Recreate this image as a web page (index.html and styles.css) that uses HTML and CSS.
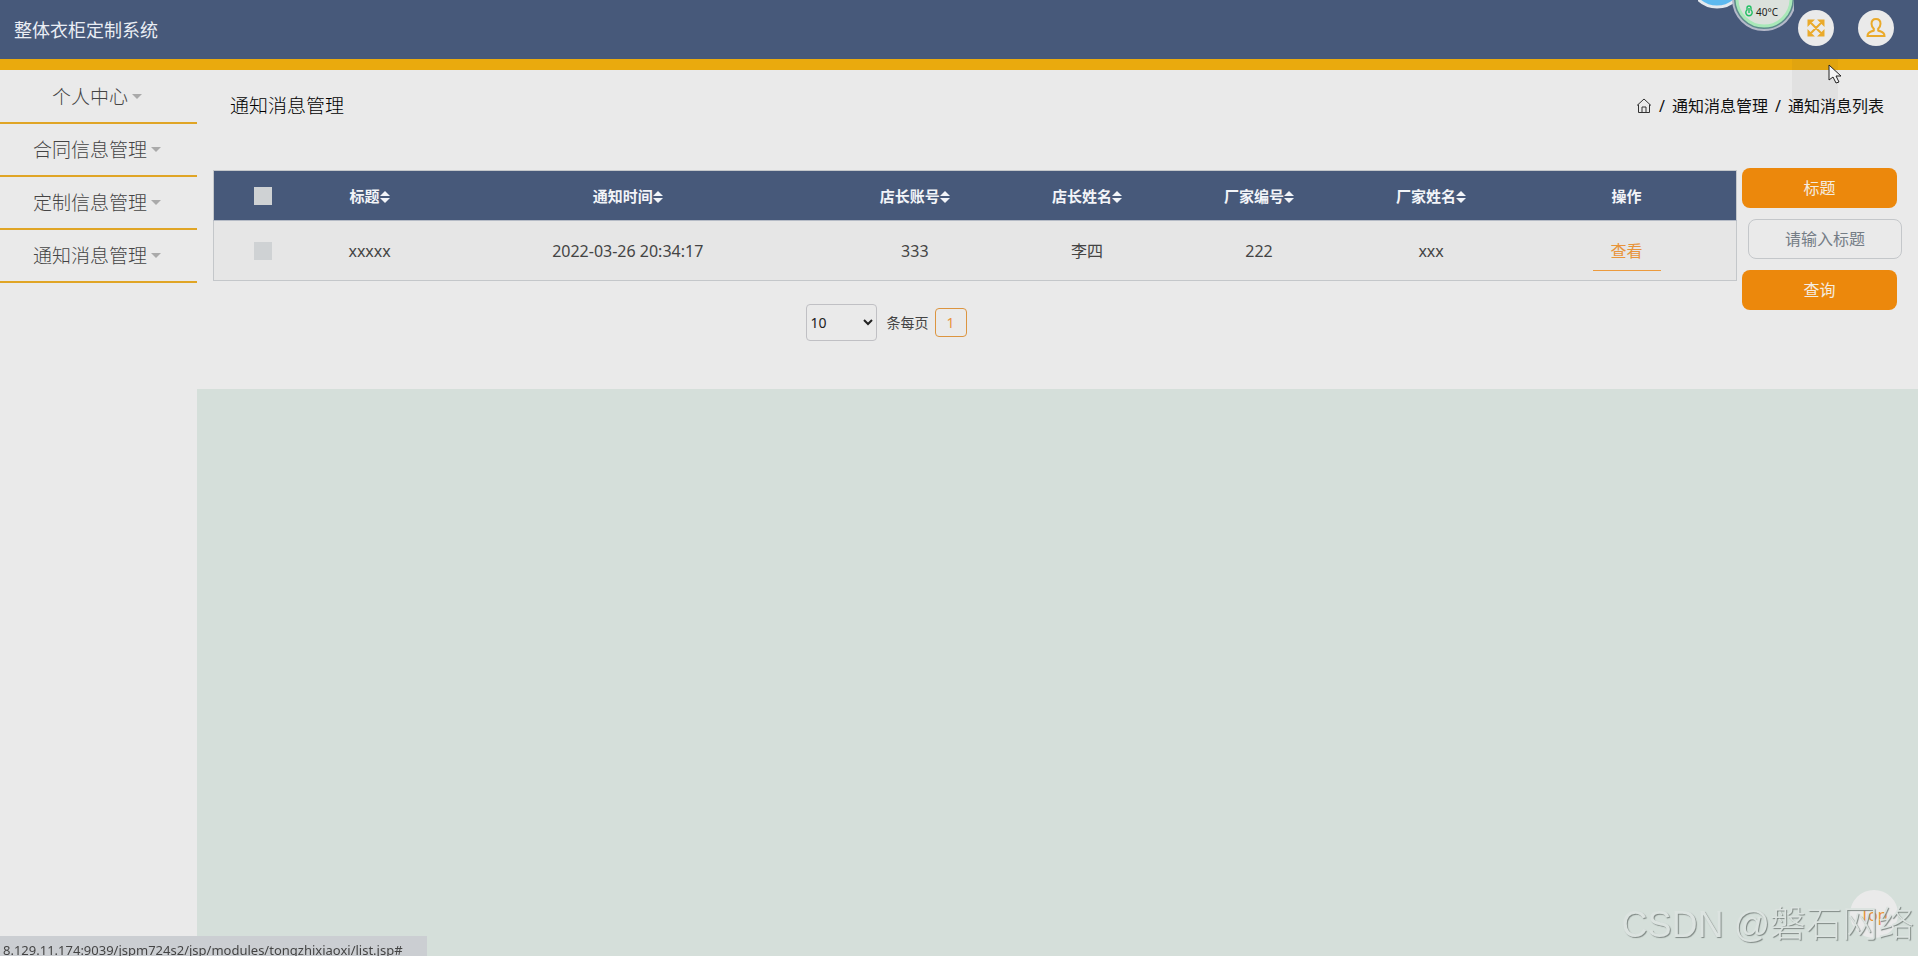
FILE: index.html
```html
<!DOCTYPE html>
<html lang="zh-CN">
<head>
<meta charset="utf-8">
<title>整体衣柜定制系统</title>
<link rel="stylesheet" href="styles.css">
</head>
<body>
<header class="topbar">
  <h1 class="brand">整体衣柜定制系统</h1>
  <div class="tools">
    <button class="tool" aria-label="全屏"><svg width="18" height="18" viewBox="0 0 18 18"><path d="M1.500 5.500v-4h4zM12.500 1.500h4v4zM16.500 12.500v4h-4zM5.500 16.500h-4v-4zM2 2l14 14M16 2L2 16"/></svg></button>
    <button class="tool" aria-label="用户"><svg width="20" height="20" viewBox="0 0 20 20"><path d="M10 1C7.200 1 5.500 3 5.500 5.800c0 2 1 3.700 2.300 4.900v1.800C4.500 14 1.500 14 1.500 18h17c0-4-3-4-6.300-5.500v-1.800c1.300-1.200 2.300-2.900 2.300-4.900C14.500 3 12.800 1 10 1z"/></svg></button>
  </div>
</header>
<div class="shell">
  <nav class="sidebar">
    <a class="item" href="#">个人中心<i class="caret"></i></a>
    <a class="item" href="#">合同信息管理<i class="caret"></i></a>
    <a class="item" href="#">定制信息管理<i class="caret"></i></a>
    <a class="item" href="#">通知消息管理<i class="caret"></i></a>
  </nav>
  <main class="main">
    <section class="panel">
      <div class="heading">
        <h2 class="title">通知消息管理</h2>
        <div class="crumbs">
          <a href="#" aria-label="首页"><svg width="16" height="16" viewBox="0 0 16 16"><path d="M1 7.500L8 1l7 6.500M2.500 6.500v8h11v-8M6 14.500V9h4v5.500"/></svg></a>
          <span>/</span><a href="#">通知消息管理</a><span>/</span><span>通知消息列表</span>
        </div>
      </div>
      <div class="content">
        <div class="listing">
          <table class="grid">
            <colgroup><col class="c-check"><col class="c-title"><col class="c-time"><col class="c-std"><col class="c-std"><col class="c-std"><col class="c-std"><col class="c-act"></colgroup>
            <thead><tr>
              <th><input class="check" type="checkbox" aria-label="全选"></th>
              <th>标题<i class="sort"></i></th>
              <th>通知时间<i class="sort"></i></th>
              <th>店长账号<i class="sort"></i></th>
              <th>店长姓名<i class="sort"></i></th>
              <th>厂家编号<i class="sort"></i></th>
              <th>厂家姓名<i class="sort"></i></th>
              <th>操作</th>
            </tr></thead>
            <tbody><tr>
              <td><input class="check" type="checkbox" aria-label="选择"></td>
              <td>xxxxx</td><td>2022-03-26 20:34:17</td><td>333</td><td>李四</td><td>222</td><td>xxx</td>
              <td><button class="view">查看</button></td>
            </tr></tbody>
          </table>
          <div class="pager">
            <select class="size" id="size"><option>10</option></select>
            <label for="size">条每页</label>
            <button class="page">1</button>
          </div>
        </div>
        <form class="search">
          <label class="pill" for="q">标题</label>
          <input class="query" id="q" type="text" placeholder="请输入标题">
          <button class="pill" type="button">查询</button>
        </form>
      </div>
    </section>
  </main>
</div>
<div class="ghost"></div>
<svg class="gauges" width="96" height="34" viewBox="0 0 96 34">
  <circle cx="19" cy="-20" r="27" fill="#5db9ef" stroke="#e4e9ee" stroke-width="3"/>
  <circle cx="66" cy="-1" r="31" fill="#5d8a8b" stroke="#b5b9ca" stroke-width="2"/>
  <circle cx="66" cy="-1" r="27" fill="#dbe1dc" stroke="#a8e8b8" stroke-width="3"/>
  <path d="M49 10V8a2 2 0 0 1 4 0v2a3.200 3.200 0 1 1-4 0zM51 8v5" fill="none" stroke="#1fbf62" stroke-width="1.400"/>
  <text class="temp" x="58" y="16">40°C</text>
</svg>
<svg class="cursor" width="14" height="20" viewBox="0 0 14 20"><path d="M1 1v15l4-3 3 6 3-1-3-6h5z"/></svg>
<a class="to-top" href="#">Top</a>
<div class="watermark">CSDN @磐石网络</div>
<div class="status">8.129.11.174:9039/jspm724s2/jsp/modules/tongzhixiaoxi/list.jsp#</div>
</body>
</html>
```
FILE: styles.css
```css
* { box-sizing: border-box; }
body { margin: 0; min-height: 100vh; display: flex; flex-direction: column; overflow: hidden; background: #d5dfda; color: #444; font: 16px/24px "Noto Sans", "Noto Sans CJK SC", sans-serif; }
button, input, select { font: inherit; }
a { color: inherit; text-decoration: none; }
svg { display: block; }
.topbar { display: flex; align-items: center; justify-content: space-between; height: 70px; padding: 0 24px 0 14px; background: #47597a; border-bottom: 11px solid #eaaa0d; }
.brand { margin: 0; color: #eaeef5; font-size: 18px; font-weight: 400; }
.tools { display: flex; gap: 24px; padding-bottom: 4px; }
.tool { display: grid; place-items: center; width: 36px; height: 36px; padding: 0; border: 0; border-radius: 50%; background: #eaeaea; }
.tool path { fill: none; stroke: #eaaa2a; stroke-width: 2; }
.shell { flex: 1; display: flex; }
.sidebar { width: 197px; padding-top: 1px; background: #eaeaea; }
.item { display: flex; align-items: center; justify-content: center; gap: 4px; height: 53px; padding-right: 3px; border-bottom: 2px solid #e0a526; font-size: 19px; font-weight: 300; }
.caret { border: 5px solid transparent; border-top-color: #aaa; border-bottom: 0; }
.main { flex: 1; }
.panel { min-height: 319px; padding: 0 16px; background: #eaeaea; }
.heading { display: flex; align-items: center; justify-content: space-between; height: 72px; padding: 0 18px 0 17px; color: #111; }
.title { margin: 0; color: #000; font-size: 19px; font-weight: 300; }
.crumbs { display: flex; align-items: center; gap: 7px; }
.crumbs path { fill: none; stroke: #333; stroke-width: 1; }
.content { display: flex; align-items: flex-start; gap: 5px; padding-top: 26px; }
.listing { flex: 1; padding-top: 2px; }
.grid { width: 100%; table-layout: fixed; border-collapse: collapse; border: 1px solid #c4c7ca; text-align: center; background: #e6e6e6; }
.grid th, .grid td { padding: 0; }
.grid th { height: 50px; background: #47597a; color: #f2f4f8; font-size: 15px; font-weight: 700; border-bottom: 1px solid #b5bbc6; }
.grid td { height: 60px; }
.c-check { width: 6.5%; }
.c-title { width: 7.5%; }
.c-time { width: 26.4%; }
.c-std { width: 11.3%; }
.check { appearance: none; display: block; width: 18px; height: 18px; margin: 0 auto; background: #cfd2d4; }
.sort { display: inline-grid; gap: 2px; vertical-align: middle; }
.sort::before, .sort::after { content: ""; border: 5px solid transparent; }
.sort::before { border-top: 0; border-bottom-color: #f2f4f8; }
.sort::after { border-bottom: 0; border-top-color: #f2f4f8; }
.view { width: 68px; height: 40px; padding: 2px 0 0; border: 0; border-bottom: 1px solid #ec9a3c; background: none; color: #e8943a; }
.pager { display: flex; align-items: center; justify-content: center; gap: 6px; padding: 23px 178px 48px 0; font-size: 14px; }
.size { width: 71px; height: 37px; margin-right: 4px; border: 1px solid #c0c0c4; border-radius: 4px; background: transparent; color: #222; }
.page { width: 32px; height: 29px; padding: 0; border: 1px solid #dc9540; border-radius: 4px; background: none; color: #e8943a; }
.search { display: flex; flex-direction: column; gap: 11px; width: 160px; }
.pill { width: 155px; height: 40px; padding: 0; border: 0; border-radius: 8px; background: #ec880c; color: #f4ece0; line-height: 40px; text-align: center; }
.query { width: 154px; height: 40px; align-self: flex-end; padding: 0; border: 1px solid #c4c7ca; border-radius: 8px; background: transparent; text-align: center; }
.query::placeholder { color: #757d86; }
.ghost { position: absolute; top: 59px; right: 80px; width: 46px; height: 42px; background: rgba(60, 60, 60, .05); }
.gauges { position: absolute; top: 0; right: 124px; }
.temp { font-size: 10px; fill: #222; }
.cursor { position: absolute; top: 64px; right: 76px; }
.cursor path { fill: #f4f4f4; stroke: #222; stroke-width: 1; }
.to-top { position: fixed; right: 20px; bottom: 18px; width: 48px; height: 48px; border-radius: 50%; background: #eaeaea; color: #e8943a; line-height: 50px; text-align: center; }
.watermark { position: fixed; right: 4px; bottom: 7px; color: #dce3e0; font: 300 36px/48px "Liberation Sans", "Noto Sans CJK SC", sans-serif; text-shadow: 1px 1px 1px #7f8884; white-space: nowrap; }
.status { position: fixed; left: 0; bottom: 0; width: 427px; height: 20px; padding: 2px 0 0 3px; background: #cbced2; color: #444; font-size: 13px; white-space: nowrap; }
```
